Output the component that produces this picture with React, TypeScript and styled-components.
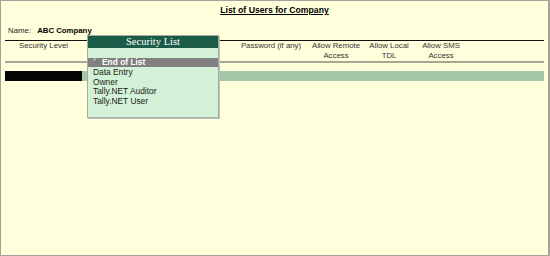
import React from 'react'
import styled, { createGlobalStyle } from 'styled-components'

const GlobalStyle = createGlobalStyle`
  html, body {
    margin: 0;
    padding: 0;
    background: #ffffdc;
  }
`

const Frame = styled.div`
  position: relative;
  box-sizing: border-box;
  width: 550px;
  height: 256px;
  padding: 0 4px;
  background: #ffffdc;
  border: 1px solid #a3a39a;
  border-right-width: 2px;
  font-family: 'Liberation Sans', Arial, sans-serif;
  color: #1c1c1c;
`

const Title = styled.div`
  padding-top: 3px;
  height: 21px;
  box-sizing: border-box;
  text-align: center;
  font-size: 8.7px;
  line-height: 12px;
  font-weight: bold;
  text-decoration: underline;
  color: #000;
`

const NameRow = styled.div`
  padding-left: 3px;
  font-size: 7.8px;
  line-height: 10px;
  height: 10px;
  margin-top: 4px;

  b {
    margin-left: 4px;
    color: #000;
  }
`

const columns = '77px 152px 74px 56px 50px 54px 1fr'

const Header = styled.div`
  display: grid;
  grid-template-columns: ${columns};
  margin-top: 4px;
  border-top: 1px solid #111;
  border-bottom: 2px solid #a8a692;
  height: 20px;
  font-size: 7.8px;
  line-height: 10px;
  color: #333;
`

const HeadCell = styled.div`
  text-align: center;
  white-space: nowrap;
`

const DataRow = styled.div`
  display: grid;
  grid-template-columns: 77px 1fr;
  height: 10px;
  margin-top: 8px;
`

const Cell = styled.div<{ $active?: boolean }>`
  background: ${p => (p.$active ? '#050505' : '#a6c8a8')};
`

const Popup = styled.div`
  position: absolute;
  left: 86px;
  top: 34px;
  width: 130px;
  box-sizing: content-box;
  background: #d3f1d6;
  border: 1px solid #a8aaa4;
  box-shadow: 1px 1px 0 #c2c2b6;
  padding-bottom: 10px;
`

const PopupTitle = styled.div`
  height: 12px;
  background: #1b5c49;
  color: #fff;
  text-align: center;
  font-family: 'Liberation Serif', 'Times New Roman', serif;
  font-size: 10.5px;
  line-height: 12px;
`

const Spacer = styled.div`
  height: 10px;
`

const Option = styled.div<{ $selected?: boolean }>`
  position: relative;
  height: ${p => (p.$selected ? '9px' : '9.7px')};
  margin-bottom: ${p => (p.$selected ? '1px' : '0')};
  padding-left: ${p => (p.$selected ? '14px' : '5px')};
  background: ${p => (p.$selected ? '#808080' : 'transparent')};
  color: ${p => (p.$selected ? '#fff' : '#1a1a1a')};
  font-weight: ${p => (p.$selected ? 'bold' : 'normal')};
  font-size: 8.4px;
  line-height: ${p => (p.$selected ? '9px' : '9.7px')};
  white-space: nowrap;
`

const ReturnMark = styled.span`
  position: absolute;
  left: 5px;
  top: -2px;
  font-family: 'DejaVu Sans', sans-serif;
  font-size: 6px;
  font-weight: normal;
  line-height: 8px;
  color: #fff;
`

const options = ['Data Entry', 'Owner', 'Tally.NET Auditor', 'Tally.NET User']

export default function App() {
  return (
    <>
      <GlobalStyle />
      <Frame>
        <Title>List of Users for Company</Title>
        <NameRow>
          Name: <b>ABC Company</b>
        </NameRow>
        <Header>
          <HeadCell>Security Level</HeadCell>
          <HeadCell />
          <HeadCell>Password (if any)</HeadCell>
          <HeadCell>
            Allow Remote
            <br />
            Access
          </HeadCell>
          <HeadCell>
            Allow Local
            <br />
            TDL
          </HeadCell>
          <HeadCell>
            Allow SMS
            <br />
            Access
          </HeadCell>
          <HeadCell />
        </Header>
        <DataRow>
          <Cell $active />
          <Cell />
        </DataRow>

        <Popup>
          <PopupTitle>Security List</PopupTitle>
          <Spacer />
          <Option $selected>
            <ReturnMark>┘</ReturnMark>
            End of List
          </Option>
          {options.map(o => (
            <Option key={o}>{o}</Option>
          ))}
        </Popup>
      </Frame>
    </>
  )
}
